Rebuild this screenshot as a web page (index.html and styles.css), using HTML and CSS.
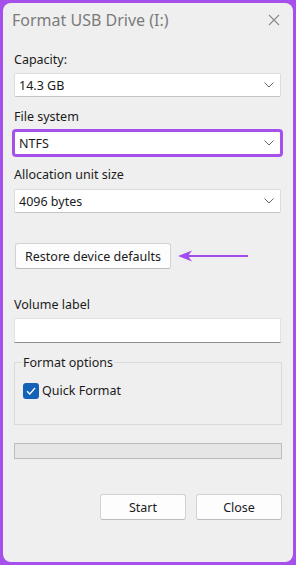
FILE: index.html
```html
<!DOCTYPE html>
<html lang="en">
<head>
  <meta charset="UTF-8">
  <meta name="viewport" content="width=device-width, initial-scale=1.0">
  <title>Format USB Drive (I:)</title>
  <link rel="stylesheet" href="styles.css">
</head>
<body>
  <div class="window">
    <div class="titlebar">
      <span class="title">Format USB Drive (I:)</span>
      <svg class="close" width="12" height="12" viewBox="0 0 12 12">
        <path d="M1 1L11 11M11 1L1 11" stroke="#8a8a8a" stroke-width="1.1" fill="none"/>
      </svg>
    </div>

    <div class="content">
      <div class="label first">Capacity:</div>
      <div class="select">
        <span>14.3 GB</span>
        <svg width="10" height="6" viewBox="0 0 10 6"><path d="M0.5 0.5L5 5L9.5 0.5" stroke="#666" stroke-width="1" fill="none"/></svg>
      </div>

      <div class="label">File system</div>
      <div class="select active">
        <span>NTFS</span>
        <svg width="10" height="6" viewBox="0 0 10 6"><path d="M0.5 0.5L5 5L9.5 0.5" stroke="#666" stroke-width="1" fill="none"/></svg>
      </div>

      <div class="label">Allocation unit size</div>
      <div class="select">
        <span>4096 bytes</span>
        <svg width="10" height="6" viewBox="0 0 10 6"><path d="M0.5 0.5L5 5L9.5 0.5" stroke="#666" stroke-width="1" fill="none"/></svg>
      </div>

      <div class="restore-row">
        <button class="btn restore">Restore device defaults</button>
        <svg class="arrow" width="72" height="14" viewBox="0 0 72 14">
          <path d="M6 7H70" stroke="#a24cf0" stroke-width="2" fill="none"/>
          <path d="M0 7L14 1.5L10 7L14 12.5Z" fill="#a24cf0"/>
        </svg>
      </div>

      <div class="label vol">Volume label</div>
      <div class="input"></div>

      <fieldset class="group">
        <legend>Format options</legend>
        <div class="check">
          <span class="box">
            <svg width="10" height="8" viewBox="0 0 10 8"><path d="M1 4.2L3.8 7L9 1" stroke="#fff" stroke-width="1.3" fill="none"/></svg>
          </span>
          Quick Format
        </div>
      </fieldset>

      <div class="progress"></div>

      <div class="actions">
        <button class="btn">Start</button>
        <button class="btn">Close</button>
      </div>
    </div>
  </div>
</body>
</html>
```

FILE: styles.css
```css
html, body {
  margin: 0;
  padding: 0;
}
body {
  background: #a650ec;
  width: 296px;
  height: 565px;
  padding: 3px;
  box-sizing: border-box;
  font-family: "Noto Sans", "Open Sans", sans-serif;
  font-size: 12.5px;
  color: #1b1b1b;
}
.window {
  background: #efefef;
  border-radius: 8px;
  height: 100%;
  overflow: hidden;
}
.titlebar {
  display: flex;
  justify-content: space-between;
  align-items: center;
  height: 34px;
  padding: 0 13px 0 9px;
}
.title {
  font-size: 16px;
  color: #7b7b7b;
}
.content {
  padding: 0 12px 0 11px;
}
.label {
  line-height: 16px;
  margin-top: 12px;
  margin-bottom: 6px;
}
.label.first {
  margin-top: 15px;
  margin-bottom: 5px;
}
.select {
  display: flex;
  justify-content: space-between;
  align-items: center;
  height: 24px;
  box-sizing: border-box;
  padding: 0 6px 0 4px;
  background: #fff;
  border: 1px solid #dcdcdc;
  border-bottom-color: #c4c4c4;
  border-radius: 2px;
}
.select.active {
  border: 1px solid #a650ec;
  box-shadow: 0 0 0 2px #a650ec;
}
.restore-row {
  display: flex;
  align-items: center;
  margin-top: 30px;
}
.btn {
  font-family: inherit;
  font-size: 12.5px;
  color: #1b1b1b;
  background: #fdfdfd;
  border: 1px solid #d2d2d2;
  border-bottom-color: #bdbdbd;
  border-radius: 3px;
  height: 26px;
  padding: 0;
}
.restore {
  width: 156px;
  margin-left: 1px;
}
.arrow {
  margin-left: 7px;
}
.label.vol {
  margin-top: 28px;
  margin-bottom: 5px;
}
.input {
  height: 25px;
  box-sizing: border-box;
  background: #fff;
  border: 1px solid #e2e2e2;
  border-bottom-color: #8c8c8c;
}
.group {
  margin: 11px 0 0;
  padding: 11px 8px 0;
  height: 71px;
  box-sizing: border-box;
  border: 1px solid #dadada;
  width: 268px;
}
.group legend {
  padding: 0 1px;
  margin-left: -1px;
}
.check {
  display: flex;
  align-items: center;
  gap: 3px;
}
.box {
  display: flex;
  align-items: center;
  justify-content: center;
  width: 16px;
  height: 16px;
  background: #1461b8;
  border-radius: 3px;
}
.progress {
  margin-top: 18px;
  height: 16px;
  width: 268px;
  box-sizing: border-box;
  background: #e6e6e6;
  border: 1px solid #bcbcbc;
}
.actions {
  display: flex;
  justify-content: flex-end;
  gap: 10px;
  margin-top: 35px;
  margin-right: -1px;
}
.actions .btn {
  width: 86px;
}
```
